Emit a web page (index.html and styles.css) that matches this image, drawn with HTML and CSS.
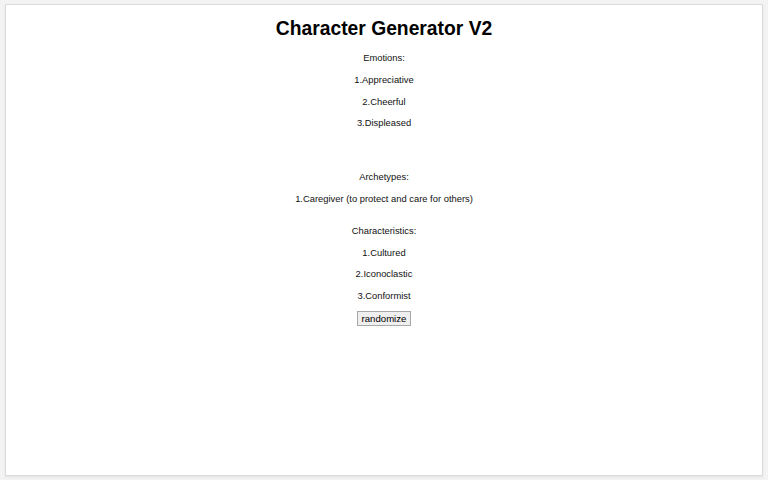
FILE: index.html
```html
<!DOCTYPE html>
<html>
<head>
<meta charset="utf-8">
<link rel="stylesheet" href="styles.css">
</head>
<body>
<div class="card">
  <h1 class="title">Character Generator V2</h1>
  <p class="line">Emotions:</p>
  <p class="line">1.Appreciative</p>
  <p class="line">2.Cheerful</p>
  <p class="line">3.Displeased</p>
  <div class="spacer"></div>
  <p class="line">Archetypes:</p>
  <p class="line">1.Caregiver (to protect and care for others)</p>
  <div class="spacer2"></div>
  <p class="line">Characteristics:</p>
  <p class="line">1.Cultured</p>
  <p class="line">2.Iconoclastic</p>
  <p class="line">3.Conformist</p>
  <button class="btn">randomize</button>
</div>
</body>
</html>
```
FILE: styles.css
```css
html, body {
  margin: 0;
  padding: 0;
  background: #f3f3f3;
}
body {
  padding: 4px 5px 4px 5px;
  height: 480px;
  box-sizing: border-box;
  font-family: "Liberation Sans", Arial, sans-serif;
}
.card {
  background: #fff;
  border: 1px solid #dcdcdc;
  box-shadow: 0 1px 2px rgba(0,0,0,0.08);
  height: 100%;
  box-sizing: border-box;
  display: flex;
  flex-direction: column;
  align-items: center;
  padding-top: 12px;
}
.title {
  font-size: 19.3px;
  font-weight: bold;
  margin: 0 0 12px 0;
  color: #000;
  line-height: 23px;
}
.line {
  font-size: 9.4px;
  line-height: 12px;
  margin: 0 0 9.8px 0;
  color: #111;
}
.spacer {
  height: 32px;
}
.spacer2 {
  height: 10px;
}
.btn {
  font-family: "Liberation Sans", Arial, sans-serif;
  font-size: 9.6px;
  padding: 1px 4px;
  background: #efefef;
  border: 1px solid #a8a8a8;
  border-radius: 0;
  color: #000;
  margin-top: -1px;
}
```
